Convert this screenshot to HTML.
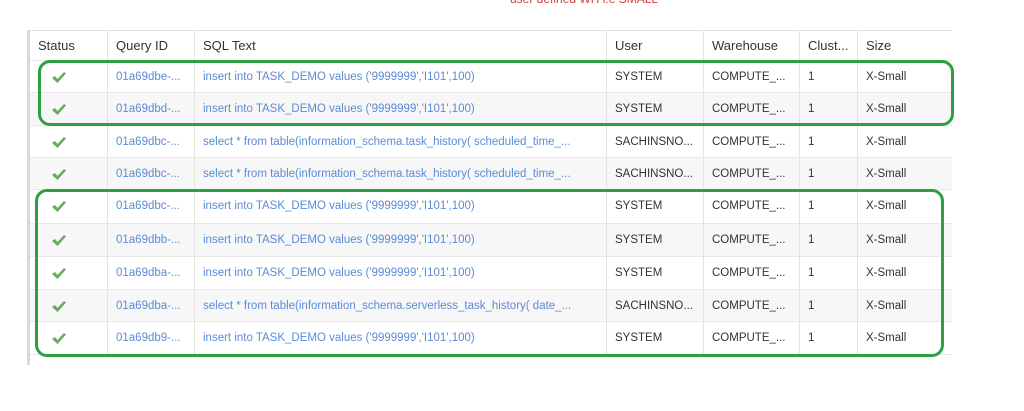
<!DOCTYPE html>
<html><head><meta charset="utf-8"><style>
body{margin:0;width:1024px;height:411px;background:#fff;position:relative;overflow:hidden;font-family:"Liberation Sans",sans-serif;}
.red{position:absolute;left:510px;top:-8px;color:#d23a3a;font-size:12px;white-space:nowrap;}
.lb{position:absolute;left:27px;top:30px;width:3px;height:335px;background:#d5d9e2;}
.row{position:absolute;left:3px;width:922px;height:33px;border-bottom:1px solid #e8e8e8;box-sizing:border-box;}
.c{position:absolute;top:0;height:100%;line-height:32px;font-size:11.5px;color:#333;border-left:1px solid #e3e3e3;padding-left:8px;box-sizing:border-box;white-space:nowrap;overflow:hidden;}
.h .c{font-size:13px;color:#333;}
.b{color:#5b8bd6;}
.chk{border-left:none;}
.chk svg{position:absolute;left:21px;top:10px;}
.box{position:absolute;border:3px solid #2ea043;border-radius:12px;box-sizing:border-box;}
</style></head><body>
<div class="red">user defined WH i.e SMALL</div>
<div class="lb"></div>
<div id="t"></div>
<div class="box" style="left:38px;top:60px;width:916px;height:66px;"></div>
<div class="box" style="left:35px;top:189px;width:909px;height:168px;"></div>
<script>
var cols=[[30,77],[107,87],[194,412],[606,97],[703,96],[799,58],[857,95]];
var rows=[
["01a69dbe-...","insert into TASK_DEMO values ('9999999','I101',100)","SYSTEM"],
["01a69dbd-...","insert into TASK_DEMO values ('9999999','I101',100)","SYSTEM"],
["01a69dbc-...","select * from table(information_schema.task_history( scheduled_time_...","SACHINSNO..."],
["01a69dbc-...","select * from table(information_schema.task_history( scheduled_time_...","SACHINSNO..."],
["01a69dbc-...","insert into TASK_DEMO values ('9999999','I101',100)","SYSTEM"],
["01a69dbb-...","insert into TASK_DEMO values ('9999999','I101',100)","SYSTEM"],
["01a69dba-...","insert into TASK_DEMO values ('9999999','I101',100)","SYSTEM"],
["01a69dba-...","select * from table(information_schema.serverless_task_history( date_...","SACHINSNO..."],
["01a69db9-...","insert into TASK_DEMO values ('9999999','I101',100)","SYSTEM"]];
var tops=[61,93,126,158,190,224,257,290,322];
var chk='<svg width="16" height="13" viewBox="0 0 16 13"><path d="M1 7 L4 5 L6.5 8 L13 1 L15 2.5 L6.5 12 Z" fill="#6aaa5e"/></svg>';
var h='<div class="row h" style="top:30px;height:31px;left:30px;width:922px;border-top:1px solid #e0e0e0;background:#fff">';
var hd=["Status","Query ID","SQL Text","User","Warehouse","Clust...","Size"];
for(var i=0;i<7;i++)h+='<div class="c" style="left:'+(cols[i][0]-30)+'px;width:'+cols[i][1]+'px;line-height:29px;'+(i==0?'border-left:none;':'')+'">'+hd[i]+'</div>';
h+='</div>';
for(var r=0;r<9;r++){
var d=rows[r];var vals=[chk,d[0],d[1],d[2],"COMPUTE_...","1","X-Small"];
h+='<div class="row" style="top:'+tops[r]+'px;left:30px;width:922px;height:'+((tops[r+1]||355)-tops[r])+'px;background:'+(r%2?'#f7f7f7':'#fff')+'">';
for(var i=0;i<7;i++){var cl='c'+(i==0?' chk':'')+(i==1||i==2?' b':'');
h+='<div class="'+cl+'" style="left:'+(cols[i][0]-30)+'px;width:'+cols[i][1]+'px;">'+vals[i]+'</div>';}
h+='</div>';}
document.getElementById('t').innerHTML=h;
</script>
</body></html>
